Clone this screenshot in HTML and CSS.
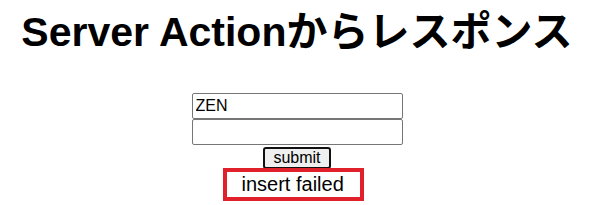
FILE: index.html
```html
<!DOCTYPE html>
<html lang="ja">
<head>
    <meta charset="UTF-8">
    <meta name="viewport" content="width=device-width, initial-scale=1.0">
    <title>Server Actionからレスポンス</title>
    <link rel="stylesheet" href="styles.css">
</head>
<body>
    <main class="page">
        <h1 class="title">Server Actionからレスポンス</h1>
        <form class="form">
            <input type="text" name="name" value="ZEN">
            <input type="text" name="note">
            <button type="submit">submit</button>
        </form>
        <p class="message">insert failed</p>
    </main>
</body>
</html>
```

FILE: styles.css
```css
* {
    margin: 0;
    padding: 0;
    box-sizing: border-box;
}

body {
    background: #fff;
    color: #000;
    font-family: "Liberation Sans", "Noto Sans CJK JP", Arial, sans-serif;
}

.page {
    display: flex;
    flex-direction: column;
    align-items: center;
    padding: 9px 10px 0 0;
}

.title {
    font-size: 41px;
    font-weight: bold;
    line-height: 46px;
    white-space: nowrap;
}

.form {
    display: flex;
    flex-direction: column;
    align-items: center;
    margin-top: 38px;
}

.form input {
    width: 211px;
    height: 26px;
    padding: 0 3px;
    border: 1px solid #767676;
    border-radius: 2px;
    font-family: "Liberation Sans", Arial, sans-serif;
    font-size: 16px;
    color: #000;
}

.form button {
    height: 22px;
    padding: 0 8px;
    margin-top: 2px;
    border: 2px solid #111;
    border-radius: 3px;
    background: #efefef;
    font-family: "Liberation Sans", Arial, sans-serif;
    font-size: 16px;
    line-height: 18px;
    color: #000;
}

.message {
    width: 141px;
    height: 33px;
    margin: -1px 8px 0 0;
    padding-left: 15px;
    border: 4px solid #e0202a;
    font-size: 20px;
    line-height: 24px;
}
```
